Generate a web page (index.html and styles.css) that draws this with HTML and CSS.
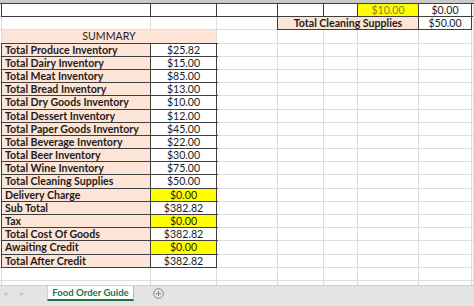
FILE: index.html
```html
<!DOCTYPE html>
<html>
<head>
<meta charset="utf-8">
<link rel="stylesheet" href="styles.css">
</head>
<body>
<div class="sheet">
  <div class="topstrip"></div>

  <!-- row 1 -->
  <div class="c"></div>
  <div class="c dk"></div>
  <div class="c dk"></div>
  <div class="c dk"></div>
  <div class="c dk"></div>
  <div class="c dk"></div>
  <div class="c dk yel val dim">$10.00</div>
  <div class="c dk val">$0.00</div>
  <div class="c"></div>

  <!-- row 2 -->
  <div class="c"></div>
  <div class="c"></div>
  <div class="c"></div>
  <div class="c"></div>
  <div class="c dk pink span3 ctr b">Total Cleaning Supplies</div>
  <div class="c dk val">$50.00</div>
  <div class="c"></div>

  <!-- row 3 -->
  <div class="c"></div>
  <div class="c pink span2 ctr">SUMMARY</div>
  <div class="c"></div><div class="c"></div><div class="c"></div><div class="c"></div><div class="c"></div><div class="c"></div>

  <div class="c"></div><div class="c dk pink lbl">Total Produce Inventory</div><div class="c dk val">$25.82</div><div class="c"></div><div class="c"></div><div class="c"></div><div class="c"></div><div class="c"></div><div class="c"></div>
  <div class="c"></div><div class="c dk pink lbl">Total Dairy Inventory</div><div class="c dk val">$15.00</div><div class="c"></div><div class="c"></div><div class="c"></div><div class="c"></div><div class="c"></div><div class="c"></div>
  <div class="c"></div><div class="c dk pink lbl">Total Meat Inventory</div><div class="c dk val">$85.00</div><div class="c"></div><div class="c"></div><div class="c"></div><div class="c"></div><div class="c"></div><div class="c"></div>
  <div class="c"></div><div class="c dk pink lbl">Total Bread Inventory</div><div class="c dk val">$13.00</div><div class="c"></div><div class="c"></div><div class="c"></div><div class="c"></div><div class="c"></div><div class="c"></div>
  <div class="c"></div><div class="c dk pink lbl">Total Dry Goods Inventory</div><div class="c dk val">$10.00</div><div class="c"></div><div class="c"></div><div class="c"></div><div class="c"></div><div class="c"></div><div class="c"></div>
  <div class="c"></div><div class="c dk pink lbl">Total Dessert Inventory</div><div class="c dk val">$12.00</div><div class="c"></div><div class="c"></div><div class="c"></div><div class="c"></div><div class="c"></div><div class="c"></div>
  <div class="c"></div><div class="c dk pink lbl">Total Paper Goods Inventory</div><div class="c dk val">$45.00</div><div class="c"></div><div class="c"></div><div class="c"></div><div class="c"></div><div class="c"></div><div class="c"></div>
  <div class="c"></div><div class="c dk pink lbl">Total Beverage Inventory</div><div class="c dk val">$22.00</div><div class="c"></div><div class="c"></div><div class="c"></div><div class="c"></div><div class="c"></div><div class="c"></div>
  <div class="c"></div><div class="c dk pink lbl">Total Beer Inventory</div><div class="c dk val">$30.00</div><div class="c"></div><div class="c"></div><div class="c"></div><div class="c"></div><div class="c"></div><div class="c"></div>
  <div class="c"></div><div class="c dk pink lbl">Total Wine Inventory</div><div class="c dk val">$75.00</div><div class="c"></div><div class="c"></div><div class="c"></div><div class="c"></div><div class="c"></div><div class="c"></div>
  <div class="c"></div><div class="c dk pink lbl">Total Cleaning Supplies</div><div class="c dk val">$50.00</div><div class="c"></div><div class="c"></div><div class="c"></div><div class="c"></div><div class="c"></div><div class="c"></div>
  <div class="c"></div><div class="c dk pink lbl">Delivery Charge</div><div class="c dk val yel">$0.00</div><div class="c"></div><div class="c"></div><div class="c"></div><div class="c"></div><div class="c"></div><div class="c"></div>
  <div class="c"></div><div class="c dk pink lbl">Sub Total</div><div class="c dk val">$382.82</div><div class="c"></div><div class="c"></div><div class="c"></div><div class="c"></div><div class="c"></div><div class="c"></div>
  <div class="c"></div><div class="c dk pink lbl">Tax</div><div class="c dk val yel">$0.00</div><div class="c"></div><div class="c"></div><div class="c"></div><div class="c"></div><div class="c"></div><div class="c"></div>
  <div class="c"></div><div class="c dk pink lbl">Total Cost Of Goods</div><div class="c dk val">$382.82</div><div class="c"></div><div class="c"></div><div class="c"></div><div class="c"></div><div class="c"></div><div class="c"></div>
  <div class="c"></div><div class="c dk pink lbl">Awaiting Credit</div><div class="c dk val yel">$0.00</div><div class="c"></div><div class="c"></div><div class="c"></div><div class="c"></div><div class="c"></div><div class="c"></div>
  <div class="c"></div><div class="c dk pink lbl">Total After Credit</div><div class="c dk val">$382.82</div><div class="c"></div><div class="c"></div><div class="c"></div><div class="c"></div><div class="c"></div><div class="c"></div>

  <div class="c"></div><div class="c"></div><div class="c"></div><div class="c"></div><div class="c"></div><div class="c"></div><div class="c"></div><div class="c"></div><div class="c"></div>
  <div class="c"></div><div class="c"></div><div class="c"></div><div class="c"></div><div class="c"></div><div class="c"></div><div class="c"></div><div class="c"></div><div class="c"></div>
</div>
<div class="tabbar">
  <span class="nav">&#9666;</span>
  <span class="nav">&#9656;</span>
  <div class="tab">Food Order Guide</div>
  <svg class="add" width="11" height="11" viewBox="0 0 11 11"><circle cx="5.5" cy="5.5" r="4.8" fill="none" stroke="#8a8a8a" stroke-width="1"/><path d="M5.5 3v5M3 5.5h5" stroke="#8a8a8a" stroke-width="1"/></svg>
</div>
</body>
</html>
```
FILE: styles.css
```css
html, body {
  margin: 0;
  padding: 0;
  background: #ffffff;
}
body {
  width: 474px;
  height: 306px;
  overflow: hidden;
  font-family: Lato, "Open Sans", sans-serif;
  color: #1c1c1c;
}
.sheet {
  display: grid;
  grid-template-columns: 2px 149px 66px 61px 46px 34px 61px 53px 2px;
  grid-template-rows: 4px repeat(22, 13.2px);
  height: 285px;
  overflow: hidden;
  background: #fff;
}
.topstrip {
  grid-column: 1 / -1;
  background: #c9c9c9;
  border-bottom: 1px solid #4a4a4a;
}
.c {
  background: #fff;
  border-right: 1px solid #dcdcdc;
  border-bottom: 1px solid #dcdcdc;
  font-size: 10.6px;
  line-height: 12px;
  white-space: nowrap;
  overflow: visible;
}
.dk {
  border-right-color: #3e3e3e;
  border-bottom-color: #3e3e3e;
  box-shadow: 0 0 0 1px #3e3e3e;
}
.pink { background: #fce4d6; }
.yel { background: #ffff00; }
.span2 { grid-column: span 2; }
.span3 { grid-column: span 3; }
.ctr { text-align: center; }
.b { font-weight: 700; }
.lbl {
  font-weight: 700;
  padding-left: 3px;
}
.val { text-align: center; }
.dim { color: #8c7a3c; }

.tabbar {
  height: 21px;
  background: #e4e4e4;
  border-top: 1px solid #d0d0d0;
  box-sizing: border-box;
  display: flex;
  align-items: flex-start;
}
.nav {
  color: #c4c4c4;
  font-size: 8px;
  line-height: 15px;
  margin-left: 3px;
  width: 14px;
  font-family: "DejaVu Sans", sans-serif;
}
.tab {
  margin-left: 13px;
  width: 85px;
  height: 13px;
  box-sizing: content-box;
  background: #fff;
  border-left: 1px solid #cfcfcf;
  border-right: 1px solid #b8b8b8;
  border-bottom: 2px solid #217346;
  color: #217346;
  font-weight: 700;
  font-size: 9.6px;
  line-height: 14px;
  text-align: center;
}
.add {
  margin-left: 19px;
  margin-top: 2px;
}
```
